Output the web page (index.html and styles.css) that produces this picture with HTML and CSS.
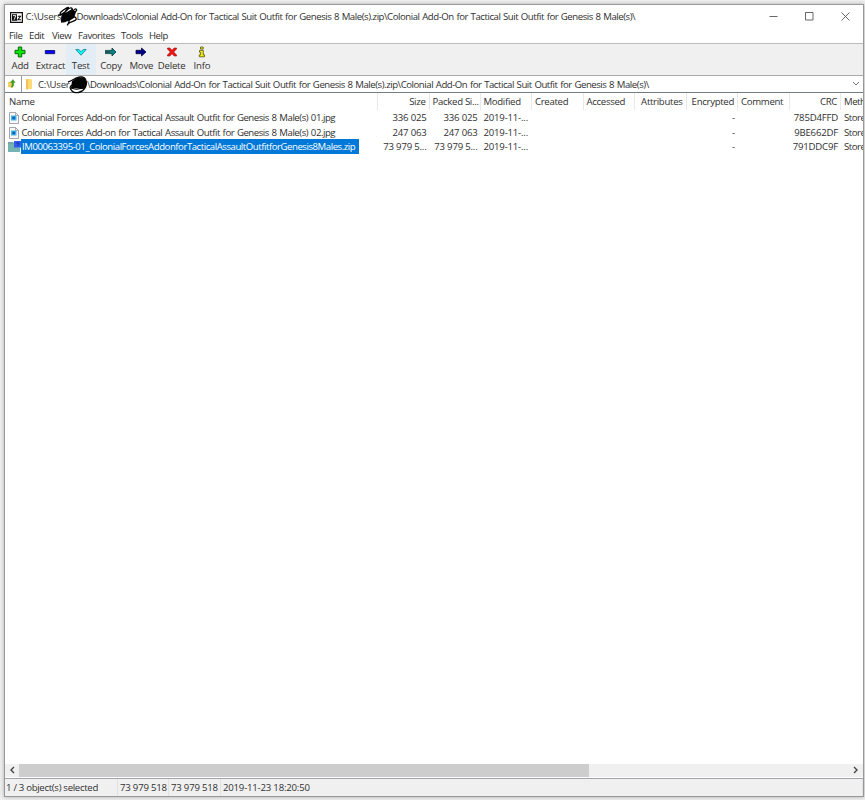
FILE: index.html
```html
<!DOCTYPE html>
<html lang="en">
<head>
<meta charset="utf-8">
<title>7-Zip File Manager</title>
<link rel="stylesheet" href="styles.css">
</head>
<body>
<svg width="0" height="0" class="defs">
  <symbol id="jpg" viewBox="0 0 10 12"><path d="M.5.5h6l3 3v8h-9z" fill="#fafafa" stroke="#8d9196" stroke-width=".8"/><path d="M6.500.5v3h3" fill="none" stroke="#8d9196" stroke-width=".7"/><path d="M2 3.500h5.500v5H2z" fill="#48b4ea"/><path d="M3.400 4.600h2.700v2.700H3.400z" fill="#0866bd"/></symbol>
</svg>
<div class="window">
  <header class="titlebar">
    <svg class="app" viewBox="0 0 13 11"><path d="M.6.6h11.800v9.800H.6z" fill="#fff" stroke="#111" stroke-width="1.200"/><path d="M2 2.200h5v6.600H2z" fill="#111"/><path d="M3 3.600h2.800L4.200 7.700" fill="none" stroke="#fff" stroke-width=".9"/><path d="M7.800 4.200h2.700L8 7.800h3" fill="none" stroke="#111" stroke-width="1.100"/></svg>
    <span class="path"><span class="pre">C:\Users</span><span>Downloads\Colonial Add-On for Tactical Suit Outfit for Genesis 8 Male(s).zip\Colonial Add-On for Tactical Suit Outfit for Genesis 8 Male(s)\</span></span>
    <svg class="scribble s1" viewBox="0 0 22 20"><path d="M5 8l5-2 5-3 4 3-2 6-5 3-6 1-2-4z" fill="#050505"/><path d="M1 9c5 1 9-6 12-7s3 3 1 7S6 18 5 15 9 4 11 2s-4 1-7 4 2 3 8 2 9-4 7-5-7 8-10 10-6 3-4 0 12-4 14-1-6 3-8 6 2-2 1-4-5 2-8 2" fill="none" stroke="#050505" stroke-width="1.300"/></svg>
    <svg class="controls" viewBox="0 0 84 12"><path d="M.5 5.500h8M36.500 1.500h7.500v7.500h-7.500zM72.500 1.500l8 8m0-8l-8 8" fill="none" stroke="#555" stroke-width=".9"/></svg>
  </header>
  <nav class="menu"><span>File</span><span>Edit</span><span>View</span><span>Favorites</span><span>Tools</span><span>Help</span></nav>
  <div class="toolbar">
    <div class="tool"><svg viewBox="0 0 12 12"><path d="M4.300 1h3.400v3.300H11v3.400H7.700V11H4.300V7.700H1V4.300h3.300z" fill="#0be50b" stroke="#075b07" stroke-width=".9"/></svg><span>Add</span></div>
    <div class="tool"><svg viewBox="0 0 12 12"><path d="M1.300 4.500h9.400v3.200H1.300z" fill="#0808f5" stroke="#050568" stroke-width=".8"/></svg><span>Extract</span></div>
    <div class="tool hot"><svg viewBox="0 0 12 12"><path d="M.8 3.500h3L6 5.700l2.200-2.200h3L6 9.200z" fill="#0ff" stroke="#167b83" stroke-width=".8"/></svg><span>Test</span></div>
    <div class="tool"><svg viewBox="0 0 12 12"><path d="M.5 4.300h1v3.400h-1zM2.500 4.300h1v3.400h-1zM4.500 4.300H7V2l4 4-4 4V7.700H4.500z" fill="#087f82" stroke="#073d3e" stroke-width=".8"/></svg><span>Copy</span></div>
    <div class="tool"><svg viewBox="0 0 12 12"><path d="M1 4.300h5.500V2l4.500 4-4.500 4V7.700H1z" fill="#00008c" stroke="#050540" stroke-width=".8"/></svg><span>Move</span></div>
    <div class="tool"><svg viewBox="0 0 12 12"><path d="M1.500 2h2.300L6 4.200 8.200 2h2.300v1L7.700 6l2.800 3v1H8.200L6 7.800 3.800 10H1.500V9l2.800-3-2.800-3z" fill="#f51414" stroke="#8b0909" stroke-width=".6"/></svg><span>Delete</span></div>
    <div class="tool"><svg viewBox="0 0 12 12"><path d="M4.500 1h2.700v2.100H4.500zM3.500 4.400h3.800v4.400h1.200v2H3.300v-2h1.300V6.300H3.500z" fill="#f2ed13" stroke="#55530c" stroke-width=".8"/></svg><span>Info</span></div>
  </div>
  <div class="address">
    <svg class="up" viewBox="0 0 10 12"><path d="M1 4l5-1v7l-5-1z" fill="#f4cf62"/><path d="M5 9c2-1 2-2 1.500-4.500H8L6 1.500 3.500 4.500H5c.5 2 0 3-1 4.500z" fill="#39a51e" stroke="#27751a" stroke-width=".4"/></svg>
    <div class="combo">
      <svg class="folder" viewBox="0 0 8 12"><path d="M1 1h5l1 1v9H1z" fill="#ffd978"/><path d="M1 1l2 1v10l-2-1z" fill="#efc158"/></svg>
      <span class="path"><span class="pre2">C:\User</span><span>\Downloads\Colonial Add-On for Tactical Suit Outfit for Genesis 8 Male(s).zip\Colonial Add-On for Tactical Suit Outfit for Genesis 8 Male(s)\</span></span>
      <svg class="scribble s2" viewBox="0 0 22 20"><path d="M5 6l5-3 7-1 2 4v6l-3 2-6-1-6 0z" fill="#050505"/><path d="M1 7c4-1 6-4 12-5s8 6 5 11-10 6-13 3-2-5 0-6M4 13c5 2 10 1 15-1" fill="none" stroke="#050505" stroke-width="1.300"/></svg>
      <svg class="down" viewBox="0 0 8 6"><path d="M1 1l3 3 3-3" fill="none" stroke="#666" stroke-width=".9"/></svg>
    </div>
  </div>
  <main class="list">
    <div class="row head"><span>Name</span><span class="r">Size</span><span class="r">Packed Si...</span><span>Modified</span><span>Created</span><span>Accessed</span><span class="r">Attributes</span><span class="r">Encrypted</span><span>Comment</span><span class="r">CRC</span><span>Meth</span></div>
    <div class="row"><span class="name"><svg class="file"><use href="#jpg"/></svg><b>Colonial Forces Add-on for Tactical Assault Outfit for Genesis 8 Male(s) 01.jpg</b></span><span class="r">336 025</span><span class="r">336 025</span><span>2019-11-...</span><span></span><span></span><span></span><span class="r">-</span><span></span><span class="r">785D4FFD</span><span>Store</span></div>
    <div class="row"><span class="name"><svg class="file"><use href="#jpg"/></svg><b>Colonial Forces Add-on for Tactical Assault Outfit for Genesis 8 Male(s) 02.jpg</b></span><span class="r">247 063</span><span class="r">247 063</span><span>2019-11-...</span><span></span><span></span><span></span><span class="r">-</span><span></span><span class="r">9BE662DF</span><span>Store</span></div>
    <div class="row last"><span class="name"><svg class="zip" viewBox="0 0 13 12"><path d="M0 1h5l1 1h6v9H0z" fill="#70a8ad"/><path d="M0 3h12v8H0z" fill="#76b3b3"/><path d="M6 0h7v6.500H6z" fill="#315cec"/><path d="M8 2h3L9.500 5" fill="none" stroke="#173091" stroke-width=".8"/></svg><b class="selected">IM00063395-01_ColonialForcesAddonforTacticalAssaultOutfitforGenesis8Males.zip</b></span><span class="r">73 979 5...</span><span class="r">73 979 5...</span><span>2019-11-...</span><span></span><span></span><span></span><span class="r">-</span><span></span><span class="r">791DDC9F</span><span>Store</span></div>
  </main>
  <div class="scroll"><svg viewBox="0 0 14 12"><path d="M9 3L6 6l3 3" fill="none" stroke="#444" stroke-width="1.400"/></svg><div class="track"><div class="thumb"></div></div><svg viewBox="0 0 14 12"><path d="M5 3l3 3-3 3" fill="none" stroke="#444" stroke-width="1.400"/></svg></div>
  <footer class="status"><span>1 / 3 object(s) selected</span><span>73 979 518</span><span>73 979 518</span><span>2019-11-23 18:20:50</span></footer>
</div>
</body>
</html>
```
FILE: styles.css
```css
* { box-sizing: border-box; }
body { margin: 0; height: 800px; padding: 4px 1px 3px 4px; background: #f0f0f0; overflow: hidden; font: 9.6px/14px "Open Sans", "Noto Sans", sans-serif; letter-spacing: -0.2px; color: #303030; }
.defs { position: absolute; }
svg { display: block; flex: none; }
.window { height: 793px; border: 1px solid #999; background: #fff; display: flex; flex-direction: column; box-shadow: 0 0 4px #aaa; overflow: hidden; white-space: nowrap; }
.titlebar { height: 24px; flex: none; display: flex; align-items: center; padding-left: 5px; position: relative; }
.app { width: 13px; height: 11px; margin-right: 2.500px; }
.path { display: flex; flex: 1; letter-spacing: -0.45px; word-spacing: 0.6px; }
.pre { width: 51px; letter-spacing: -0.2px; }
.pre2 { width: 49px; letter-spacing: -0.2px; }
.scribble { position: absolute; width: 22px; height: 20px; }
.s1 { left: 52px; top: 1px; }
.s2 { left: 45px; top: -1px; }
.controls { width: 84px; height: 12px; margin-right: 10px; }
.menu { height: 14px; flex: none; padding-left: 4px; display: grid; grid-template-columns: 20px 23px 26px 43px 28px 30px; line-height: 14px; letter-spacing: -0.45px; }
.toolbar { height: 32px; flex: none; background: #f0f0f0; border-top: 1px solid #bbb; display: flex; }
.tool { width: 30.300px; display: flex; flex-direction: column; align-items: center; padding-top: 2px; }
.tool svg { width: 12px; height: 12px; }
.tool span { margin-top: 1px; }
.hot { background: #e3edf5; }
.address { height: 18px; flex: none; display: flex; border-bottom: 1px solid #777d88; border-top: 1px solid #aaa; }
.up { width: 10px; height: 12px; margin: 2px 4px 0 2px; }
.combo { flex: 1; border-left: 1px solid #999; display: flex; align-items: center; position: relative; padding-left: 3px; }
.combo .path { padding-top: 1px; }
.folder { width: 8px; height: 12px; margin-right: 5px; }
.down { width: 8px; height: 6px; margin-right: 3px; }
.list { flex: 1; }
.row { display: grid; grid-template-columns: 372.500px 52px 51px 51.500px 51.500px 51px 52px 51.500px 51.500px 51.500px 1fr; height: 15px; line-height: 15px; }
.row > span { padding: 0 3px; overflow: hidden; }
.row .r { text-align: right; }
.row > span:last-child { padding-right: 0; letter-spacing: -0.45px; }
.head { height: 17px; line-height: 18px; letter-spacing: -0.3px; }
.head > span { border-right: 1px solid #e8e8e8; }
.head > span:last-child { border-right: 0; }
.head > span:first-child { padding-left: 4px; }
.row .name { display: flex; align-items: center; padding-left: 4px; }
b { font-weight: normal; letter-spacing: -0.46px; word-spacing: 0.7px; }
.file { width: 10px; height: 12px; margin-right: 2.500px; }
.zip { width: 13px; height: 12px; margin-left: -1px; }
.last { margin-top: -1px; }
.selected { background: #0078d7; color: #fff; height: 15px; padding: 0 2px 0 1px; width: 338px; letter-spacing: -0.45px; }
.scroll { height: 13px; flex: none; display: flex; background: #f0f0f0; }
.scroll svg { width: 14px; height: 12px; }
.track { flex: 1; }
.thumb { width: 570px; height: 13px; background: #cdcdcd; }
.status { height: 18px; flex: none; margin-top: 1px; background: #f0f0f0; border-top: 1px solid #a2a2aa; display: grid; grid-template-columns: 113px 51px 52px 1fr; line-height: 18px; }
.status span { padding-left: 2px; border-right: 1px solid #e1e1e1; }
.status span:first-child { padding-left: 1px; letter-spacing: -0.3px; }
```
